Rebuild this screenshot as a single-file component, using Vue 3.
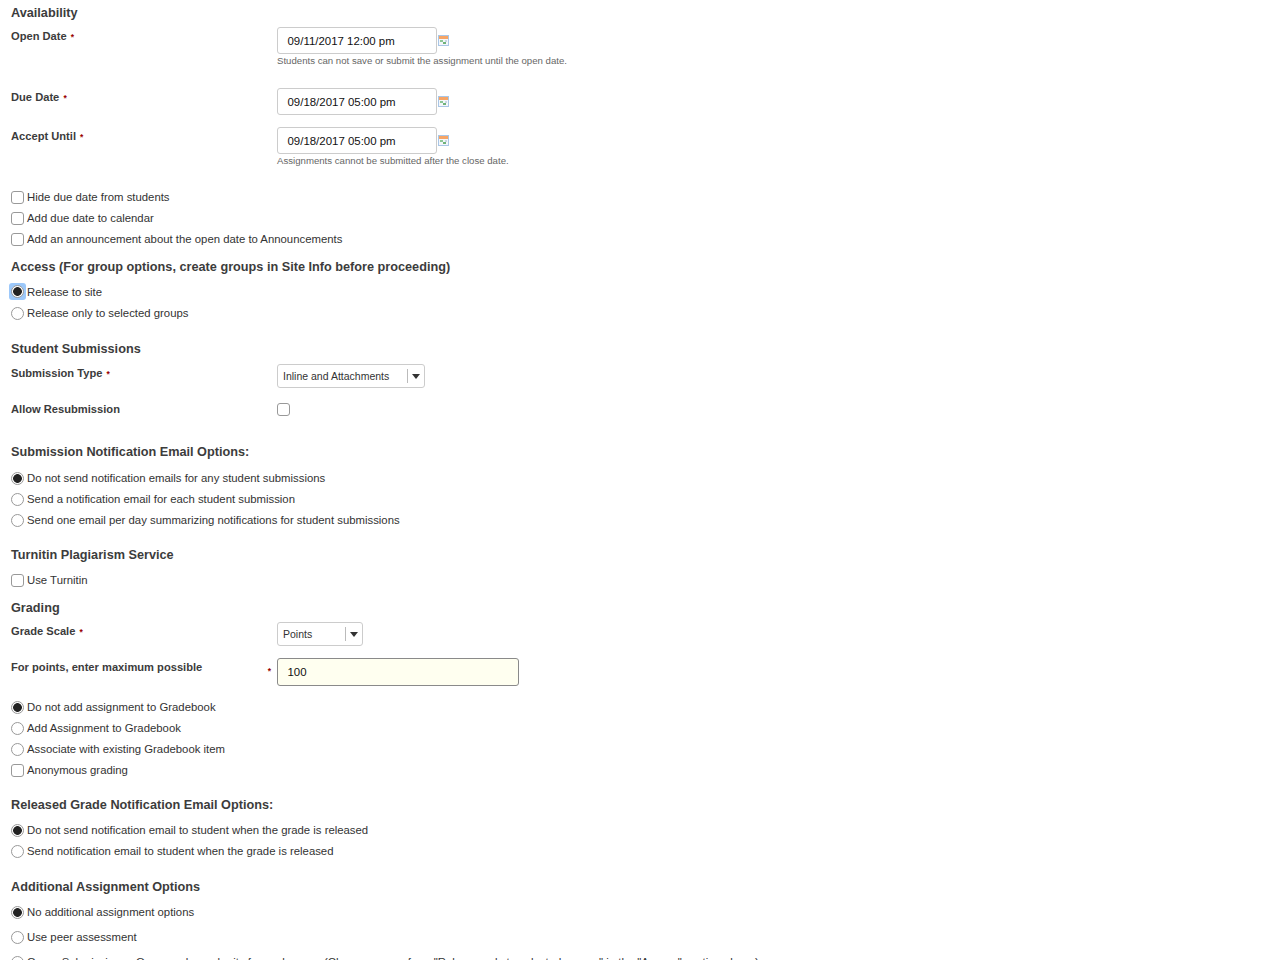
<script setup>
const dateRows = [
  { label: 'Open Date', value: '09/11/2017 12:00 pm', gap: 'mt-6', help: 'Students can not save or submit the assignment until the open date.' },
  { label: 'Due Date', value: '09/18/2017 05:00 pm', gap: 'mt-20' },
  { label: 'Accept Until', value: '09/18/2017 05:00 pm', gap: 'mt-12', help: 'Assignments cannot be submitted after the close date.' },
]
const gradeOptions = [
  { text: 'Do not add assignment to Gradebook', checked: true },
  { text: 'Add Assignment to Gradebook' },
  { text: 'Associate with existing Gradebook item' },
]
const notifyOptions = [
  { text: 'Do not send notification emails for any student submissions', checked: true },
  { text: 'Send a notification email for each student submission' },
  { text: 'Send one email per day summarizing notifications for student submissions' },
]
const releaseOptions = [
  { text: 'Do not send notification email to student when the grade is released', checked: true },
  { text: 'Send notification email to student when the grade is released' },
]
const dueOptions = [
  'Hide due date from students',
  'Add due date to calendar',
  'Add an announcement about the open date to Announcements',
]
</script>

<template>
  <form class="page" @submit.prevent>
    <h4 class="head">Availability</h4>

    <div v-for="d in dateRows" :key="d.label" class="row" :class="d.gap">
      <div class="lbl">{{ d.label }} <span class="req">*</span></div>
      <div>
        <div class="date-line">
          <div class="field date">{{ d.value }}</div>
          <svg class="cal" viewBox="0 0 11 11" width="11" height="11">
            <rect x="0.5" y="0.5" width="10" height="10" fill="#f4f7fb" stroke="#a9c6e6" />
            <rect x="1" y="1" width="9" height="3" fill="#f7a566" />
            <rect x="2" y="5" width="3" height="2" fill="#8cc796" />
            <rect x="5" y="7" width="3" height="2" fill="#6fb27a" />
            <rect x="7" y="5" width="2" height="2" fill="#c9d6e4" />
          </svg>
        </div>
        <p v-if="d.help" class="help">{{ d.help }}</p>
      </div>
    </div>

    <div class="mt-18">
      <label v-for="text in dueOptions" :key="text" class="opt">
        <input type="checkbox" class="box" />{{ text }}
      </label>
    </div>

    <h4 class="head mt-6">Access (For group options, create groups in Site Info before proceeding)</h4>
    <div class="mt-6">
      <label class="opt">
        <span class="focus-ring"><input type="radio" name="access" class="radio" checked /></span>Release to site
      </label>
      <label class="opt">
        <input type="radio" name="access" class="radio" />Release only to selected groups
      </label>
    </div>

    <h4 class="head mt-14">Student Submissions</h4>
    <div class="row mt-7">
      <div class="lbl">Submission Type <span class="req">*</span></div>
      <div class="select select-type">
        <span class="select-text">Inline and Attachments</span>
        <span class="select-btn"><i class="caret"></i></span>
      </div>
    </div>
    <div class="row mt-12">
      <div class="lbl">Allow Resubmission</div>
      <div class="check-cell"><input type="checkbox" class="box" /></div>
    </div>

    <h4 class="head mt-22">Submission Notification Email Options:</h4>
    <div class="mt-7">
      <label v-for="o in notifyOptions" :key="o.text" class="opt">
        <input type="radio" name="notify" class="radio" :checked="o.checked" />{{ o.text }}
      </label>
    </div>

    <h4 class="head mt-13">Turnitin Plagiarism Service</h4>
    <div class="mt-6">
      <label class="opt"><input type="checkbox" class="box" />Use Turnitin</label>
    </div>

    <h4 class="head mt-6">Grading</h4>
    <div class="row mt-6">
      <div class="lbl">Grade Scale <span class="req">*</span></div>
      <div class="select select-scale">
        <span class="select-text">Points</span>
        <span class="select-btn"><i class="caret"></i></span>
      </div>
    </div>
    <div class="row mt-12">
      <div class="lbl lbl-split">For points, enter maximum possible <span class="req req-far">*</span></div>
      <div class="field points">100</div>
    </div>

    <div class="mt-10">
      <label v-for="o in gradeOptions" :key="o.text" class="opt">
        <input type="radio" name="grade" class="radio" :checked="o.checked" />{{ o.text }}
      </label>
      <label class="opt"><input type="checkbox" class="box" />Anonymous grading</label>
    </div>

    <h4 class="head mt-13">Released Grade Notification Email Options:</h4>
    <div class="mt-6">
      <label v-for="o in releaseOptions" :key="o.text" class="opt">
        <input type="radio" name="release" class="radio" :checked="o.checked" />{{ o.text }}
      </label>
    </div>

    <h4 class="head mt-14">Additional Assignment Options</h4>
    <div class="mt-6">
      <label class="opt"><input type="radio" name="extra" class="radio" checked />No additional assignment options</label>
      <label class="opt mt-4"><input type="radio" name="extra" class="radio" />Use peer assessment</label>
      <label class="opt mt-4"><input type="radio" name="extra" class="radio" />Group Submissions - One member submits for each group (Choose groups from "Release only to selected groups" in the "Access" section above)</label>
    </div>
  </form>
</template>

<style scoped>
.page {
  height: 960px;
  overflow: hidden;
  box-sizing: border-box;
  padding: 1px 0 0 11px;
  font-family: "Liberation Sans", Arial, sans-serif;
  font-size: 11.35px;
  color: #333;
  background: #fff;
}
.head {
  margin: 0;
  height: 20px;
  line-height: 24px;
  font-size: 12.7px;
  font-weight: 700;
  color: #3c3c3c;
}
.row {
  display: grid;
  grid-template-columns: 266px 1fr;
  align-items: start;
}
.lbl {
  line-height: 18px;
  font-size: 11.15px;
  font-weight: 700;
  color: #3c3c3c;
}
.lbl-split {
  display: flex;
  justify-content: space-between;
  padding-right: 6px;
}
.req {
  margin-left: 1px;
  color: #900;
  font-size: 8.5px;
  font-weight: 700;
}
.req-far {
  padding-top: 4px;
}
.date-line {
  display: flex;
  align-items: center;
}
.field {
  box-sizing: border-box;
  padding-left: 9.5px;
  border: 1px solid #ccc;
  border-radius: 3px;
  color: #111;
  font-size: 11.45px;
  background: #fff;
}
.date {
  width: 160px;
  height: 27px;
  line-height: 26px;
}
.points {
  width: 242px;
  height: 28px;
  line-height: 26px;
  border-color: #8a8a8a;
  background: #fffff0;
}
.cal {
  margin-left: 1px;
}
.help {
  margin: 0;
  line-height: 14px;
  font-size: 9.65px;
  color: #666;
}
.opt {
  display: flex;
  align-items: center;
  height: 21px;
  white-space: nowrap;
}
.box,
.radio {
  appearance: none;
  flex: none;
  box-sizing: border-box;
  width: 13px;
  height: 13px;
  margin: 1px 3px 0 0;
  border: 1px solid #999;
  background: #fff;
}
.box {
  border-radius: 3px;
}
.radio {
  border-radius: 50%;
}
.radio:checked {
  background: radial-gradient(circle, #222 0 4px, #fff 4.7px);
}
.focus-ring {
  display: flex;
  margin: 0 1px 0 -2px;
  padding: 2px 0 2px 2px;
  border-radius: 3px;
  background: #9cc8fa;
}
.focus-ring .radio {
  margin: 0 2px 0 0;
}
.select {
  display: flex;
  align-items: center;
  box-sizing: border-box;
  height: 24px;
  border: 1px solid #ccc;
  border-radius: 3px;
  padding-left: 5px;
  font-size: 10.5px;
  color: #333;
}
.select-type {
  width: 148px;
}
.select-scale {
  width: 86px;
}
.select-text {
  flex: 1;
}
.select-btn {
  display: flex;
  align-items: center;
  justify-content: center;
  width: 16px;
  height: 14px;
  border-left: 1px solid #bbb;
}
.caret {
  border-top: 5px solid #333;
  border-left: 4.5px solid transparent;
  border-right: 4.5px solid transparent;
}
.check-cell {
  display: flex;
  align-items: center;
  height: 18px;
}
.mt-4 { margin-top: 4px; }
.mt-6 { margin-top: 6px; }
.mt-7 { margin-top: 7px; }
.mt-10 { margin-top: 10px; }
.mt-12 { margin-top: 12px; }
.mt-13 { margin-top: 13px; }
.mt-14 { margin-top: 14px; }
.mt-18 { margin-top: 18px; }
.mt-20 { margin-top: 20px; }
.mt-22 { margin-top: 22px; }
</style>

<style>
html, body {
  overflow: hidden;
  background: #fff;
}
</style>
